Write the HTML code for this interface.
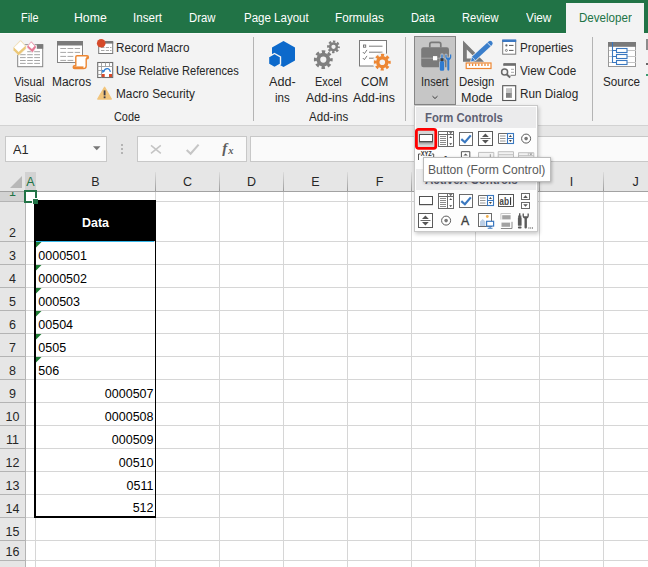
<!DOCTYPE html>
<html lang="en">
<head>
<meta charset="utf-8">
<title>Excel - Developer tab</title>
<style>
html,body{margin:0;padding:0;}
body{width:648px;height:567px;overflow:hidden;position:relative;background:#e6e6e6;
 font-family:"Liberation Sans",sans-serif;color:#262626;}
.abs{position:absolute;}
svg{position:absolute;overflow:visible;}
.t{position:absolute;white-space:nowrap;line-height:1;transform-origin:0 0;}
#tabs{left:0;top:0;width:648px;height:33px;background:#217346;}
#devtab{left:566px;top:3px;width:78px;height:30px;background:#f3f3f3;}
#ribbon{left:0;top:33px;width:648px;height:92px;background:#f3f3f3;}
#ribline{left:0;top:125px;width:648px;height:1px;background:#d2d2d2;}
.sep{position:absolute;top:37px;width:1px;height:84px;background:#b4b4b4;}
.fbox{position:absolute;background:#fafafa;border:1px solid #c8c8c8;box-sizing:border-box;}
#sheet{left:0;top:191px;width:648px;height:376px;background:#fff;}
#colhdr{left:0;top:172px;width:648px;height:19px;background:#e6e6e6;}
.vl{position:absolute;width:1px;background:#d6d6d6;}
.hl{position:absolute;height:1px;background:#d6d6d6;}
</style>
</head>
<body>
<div id="tabs" class="abs"></div><div id="devtab" class="abs"></div>
<span class="t" style="left:20.50px;top:12.42px;font-size:12.5px;color:#ffffff;transform:scaleX(0.8688);">File</span>
<span class="t" style="left:73.50px;top:12.42px;font-size:12.5px;color:#ffffff;transform:scaleX(0.9807);">Home</span>
<span class="t" style="left:133.20px;top:12.42px;font-size:12.5px;color:#ffffff;transform:scaleX(0.9276);">Insert</span>
<span class="t" style="left:189.30px;top:12.42px;font-size:12.5px;color:#ffffff;transform:scaleX(0.9051);">Draw</span>
<span class="t" style="left:243.50px;top:12.42px;font-size:12.5px;color:#ffffff;transform:scaleX(0.9217);">Page Layout</span>
<span class="t" style="left:335.20px;top:12.42px;font-size:12.5px;color:#ffffff;transform:scaleX(0.9368);">Formulas</span>
<span class="t" style="left:411.10px;top:12.42px;font-size:12.5px;color:#ffffff;transform:scaleX(0.8938);">Data</span>
<span class="t" style="left:462.40px;top:12.42px;font-size:12.5px;color:#ffffff;transform:scaleX(0.8930);">Review</span>
<span class="t" style="left:526.00px;top:12.42px;font-size:12.5px;color:#ffffff;transform:scaleX(0.9417);">View</span>
<span class="t" style="left:578.50px;top:12.42px;font-size:12.5px;color:#217346;transform:scaleX(0.9267);">Developer</span>
<div id="ribbon" class="abs"></div><div id="ribline" class="abs"></div><div class="abs" style="left:0;top:33px;width:566px;height:1px;background:#fafafa"></div>
<!-- group separators -->
<div class="sep" style="left:253px"></div>
<div class="sep" style="left:405px"></div>
<div class="sep" style="left:592px"></div>

<!-- Visual Basic icon -->
<svg style="left:8px;top:34px" width="44" height="40" viewBox="0 0 44 40">
  <rect x="9.700" y="10.700" width="25" height="22" fill="#fff" stroke="#858585"/>
  <rect x="28.800" y="10.200" width="6.400" height="4.600" fill="#7a7a7a"/>
  <path d="M19.200 17.700h5.600M26.200 17.700h5.800M12 20.700h5.700M19.200 20.700h5.600M26.200 20.700h5.800M12 23.600h5.700M19.200 23.600h5.600M26.200 23.600h5.800M12 26.500h5.700M19.200 26.500h5.600M26.200 26.500h5.800M12 29.400h5.700M19.200 29.400h5.600M26.200 29.400h5.800" stroke="#a6a6a6" stroke-width="1"/>
  <path d="M12.600 6.100 L18.100 12 L18.100 14.700 L10.600 21.700 L5.200 16.300 L5.200 13.600 Z" fill="#ecc878" stroke="#f3f3f3" stroke-width="0.600"/>
  <path d="M12.600 7.100 L17.200 12 L10.600 17.900 L6 13.600 Z" fill="#fff"/>
  <path d="M23.400 7.100 L28.100 12.500 L28.100 13.700 L24.500 18.700 L19 13.400 L19 12 Z" fill="#e67a96" stroke="#f3f3f3" stroke-width="0.600"/>
  <path d="M23.300 8.300 L26.600 12 L23.900 15 L20.300 11.800 Z" fill="#fff"/>
</svg>

<!-- Macros icon -->
<svg style="left:56px;top:40px" width="34" height="30" viewBox="0 0 34 30">
  <rect x="1.500" y="1.500" width="25" height="21" fill="#fff" stroke="#858585"/>
  <rect x="1" y="1" width="26" height="4.500" fill="#7a7a7a"/>
  <path d="M4.300 8.500h5.800M11.500 8.500h5.800M18.700 8.500h5.400M4.300 12.400h5.800M11.500 12.400h5.800M18.700 12.400h5.400M4.300 16.400h5.800M11.500 16.400h5.800M4.300 20.400h5.800M11.500 20.400h5.800" stroke="#a6a6a6" stroke-width="1"/>
  <path d="M21 15.700 L31 15.700 Q32.400 15.700 32.400 17.200 Q32.400 18.700 31 18.700 L30.200 18.700 L30.200 26 Q30.200 28.600 27.400 28.600 L18.600 28.600 Q17.200 28.600 17.200 27.200 Q17.200 25.800 18.600 25.800 L19.800 25.800 L19.800 17 Q19.800 15.700 21 15.700 Z" fill="#fff" stroke="#ed8733" stroke-width="1.400" stroke-linejoin="round"/>
  <path d="M17.500 27.300 L27.500 27.300" stroke="#ed8733" stroke-width="1.800"/>
  <path d="M30.300 17.200 L32.200 17.200" stroke="#ed8733" stroke-width="1.600"/>
</svg>

<!-- Record Macro -->
<svg style="left:96px;top:38px" width="18" height="17" viewBox="0 0 18 17">
  <rect x="2.700" y="4.500" width="14" height="11" fill="#fff" stroke="#7a7a7a"/>
  <rect x="9" y="3" width="8.200" height="2.600" fill="#7a7a7a"/>
  <path d="M5 9.500h3.500M9.800 9.500h3.200M14 9.500h1.500M5 12.500h3.500M9.800 12.500h3.200M14 12.500h1.500" stroke="#a8a8a8"/>
  <circle cx="5.200" cy="5.200" r="4.300" fill="#d64a2a"/>
</svg>

<!-- Use Relative References -->
<svg style="left:96px;top:61px" width="18" height="18" viewBox="0 0 18 18">
  <rect x="1.700" y="1.500" width="15" height="15" fill="#fff" stroke="#6e6e6e" stroke-width="1.100"/>
  <path d="M1.500 5.500h15M5.500 1.500v15M9.500 1.500v4M13.500 1.500v4M1.500 9.500h4M1.500 13.500h4" stroke="#9c9c9c" stroke-width="0.900"/>
  <rect x="5.700" y="13" width="3" height="3" fill="#d64a2a"/><rect x="13" y="13" width="3" height="3" fill="#d64a2a"/>
  <path d="M7.600 10.600 Q8.600 7.600 11.200 7.600 Q13.900 7.600 14.300 11" fill="none" stroke="#2b7cd3" stroke-width="1.150"/>
  <path d="M5.800 8.800 L9.200 9.700 L6.500 12.200 Z" fill="#2b7cd3"/>
</svg>

<!-- Macro Security -->
<svg style="left:96px;top:85px" width="18" height="16" viewBox="0 0 18 16">
  <path d="M8.600 2.300 L15.300 14 L1.800 14 Z" fill="#f2c57c" stroke="#f2c57c" stroke-width="1.400" stroke-linejoin="round"/>
  <rect x="7.700" y="5.400" width="1.800" height="5" fill="#3b3b4a"/><rect x="7.700" y="11.400" width="1.800" height="1.800" fill="#3b3b4a"/>
</svg>

<!-- Add-ins -->
<svg style="left:267px;top:40px" width="30" height="30" viewBox="0 0 30 30">
  <path d="M16.500 1 L28 7.500 L28 20.500 L16.500 27 L5 20.500 L5 7.500 Z" fill="#0c69cb"/>
  <path d="M7.500 13.500 L13.500 17 L13.500 24 L7.500 27.500 L1.500 24 L1.500 17 Z" fill="#0c69cb" stroke="#f3f3f3" stroke-width="1.400"/>
</svg>

<!-- Excel Add-ins (gears) -->
<svg style="left:313px;top:39px" width="30" height="32" viewBox="0 0 30 32">
  <g fill="none" stroke="#808080">
    <circle cx="10.300" cy="20.600" r="5" stroke-width="3.800"/>
    <circle cx="10.300" cy="20.600" r="7.900" stroke-width="3" stroke-dasharray="3.400 2.800" stroke-dashoffset="1.700"/>
    <circle cx="20.500" cy="7.800" r="3.400" stroke-width="2.500"/>
    <circle cx="20.500" cy="7.800" r="5.300" stroke-width="2.200" stroke-dasharray="2.400 1.760" stroke-dashoffset="1.200"/>
  </g>
</svg>

<!-- COM Add-ins -->
<svg style="left:357px;top:39px" width="35" height="33" viewBox="0 0 35 33">
  <rect x="2.500" y="1.500" width="27" height="25.500" fill="#fff" stroke="#7a7a7a"/>
  <rect x="6.500" y="6" width="2.200" height="2.200" fill="none" stroke="#6e6e6e" stroke-width="0.900"/>
  <path d="M12 7.200h13.500M12 13.200h13.500M12 19.200h6" stroke="#7a7a7a"/>
  <path d="M5.800 13l1.600 1.700l2.600 -3.800M5.800 19l1.600 1.700l2.600 -3.800" fill="none" stroke="#6e6e6e" stroke-width="0.900"/>
  <circle cx="25.300" cy="23.200" r="9.600" fill="#f3f3f3"/>
  <g fill="none" stroke="#ed8733">
    <circle cx="25.300" cy="23.200" r="4.500" stroke-width="3.400"/>
    <circle cx="25.300" cy="23.200" r="7" stroke-width="2.800" stroke-dasharray="3 2.500" stroke-dashoffset="1.500"/>
  </g>
</svg>

<!-- Insert (pressed) -->
<div class="abs" style="left:414px;top:36px;width:42px;height:69px;background:#c6c6c6;border:1px solid #868686;box-sizing:border-box"></div>
<svg style="left:412px;top:34px" width="88" height="40" viewBox="0 0 88 40">
  <path d="M17.800 13.500 L17.800 10.200 Q17.800 8.400 19.600 8.400 L27 8.400 Q28.800 8.400 28.800 10.200 L28.800 13.500" fill="none" stroke="#7a7a7a" stroke-width="1.700"/>
  <rect x="9.200" y="13.300" width="27.800" height="20" rx="2.200" fill="#7a7a7a"/>
  <path d="M9.200 24.200 L37 24.200" stroke="#b4b4b4" stroke-width="0.800"/>
  <rect x="21" y="22.100" width="4.200" height="4.200" fill="#fff"/>
  <g stroke="#c6c6c6" stroke-width="1.600" paint-order="stroke" stroke-linejoin="round">
    <path d="M29.300 20.400 L30.700 20.400 L30.700 24 L31.500 24 L31.500 27.600 Q32.200 28 32.200 29 L32.200 35.400 Q32.200 36.700 30.900 36.700 L29.100 36.700 Q27.800 36.700 27.800 35.400 L27.800 29 Q27.800 28 28.500 27.600 L28.500 24 L29.300 24 Z" fill="#2f7bd0"/>
    <path d="M33.400 20.600 Q32.900 25 35.300 26.300 L35.300 35.600 Q35.300 36.700 36.300 36.700 Q37.300 36.700 37.300 35.600 L37.300 26.300 Q39.700 25 39.200 20.600 L38 20.600 L38 23.600 L34.600 23.600 L34.600 20.600 Z" fill="#2f7bd0"/>
  </g>
  <rect x="28.500" y="24.300" width="3" height="2.800" fill="#3a3a3a"/>
</svg>
<svg style="left:431px;top:94px" width="8" height="6" viewBox="0 0 8 6"><path d="M1.500 2.200 L4 4.500 L6.500 2.200" fill="none" stroke="#3c3c3c" stroke-width="1"/></svg>

<!-- Design Mode -->
<svg style="left:412px;top:34px" width="88" height="40" viewBox="0 0 88 40">
  <path d="M51 6.500 L51 27.800 L72 27.800 Z M54.800 15.500 L54.800 24.600 L63.800 24.600 Z" fill="#7a7a7a" fill-rule="evenodd"/>
  <rect x="54.200" y="29" width="24.800" height="5.500" fill="#fff" stroke="#ed8733" stroke-width="1.200"/>
  <path d="M57.500 29.500v2.600M60.600 29.500v2.600M63.700 29.500v2.600M66.800 29.500v2.600M69.900 29.500v2.600M73 29.500v2.600M76 29.500v2.600" stroke="#ed8733" stroke-width="1.300"/>
  <g stroke="#f3f3f3" stroke-width="1.400" paint-order="stroke" stroke-linejoin="round">
    <path d="M59 27.400 L60 22.800 L76.600 7.400 Q78.300 6.100 79.900 7.600 Q81.500 9.200 80.100 10.900 L63.500 26.300 Z" fill="#3a7ecb"/>
  </g>
  <path d="M75.300 8.700 L78.900 12.200" stroke="#f3f3f3" stroke-width="0.900"/>
  <path d="M60.300 23.200 L63.100 26" stroke="#f3f3f3" stroke-width="0.700"/>
</svg>

<!-- Properties -->
<svg style="left:501px;top:38px" width="16" height="18" viewBox="0 0 16 18">
  <rect x="1.700" y="2.500" width="13" height="13.700" fill="#fff" stroke="#7a7a7a"/>
  <rect x="1.200" y="1.400" width="14" height="2.600" fill="#3b78c2"/>
  <circle cx="5.400" cy="7.400" r="1.100" fill="#666"/>
  <circle cx="5.400" cy="12.400" r="1" fill="none" stroke="#666" stroke-width="0.800"/>
  <path d="M8 7.400h4.500M8 12.400h4.500" stroke="#555"/>
</svg>

<!-- View Code -->
<svg style="left:500px;top:62px" width="17" height="17" viewBox="0 0 17 17">
  <path d="M3.900 3.500 L3.900 1.800 L15.500 1.800 L15.500 13.300 L10.500 13.300" fill="#fff" stroke="#7a7a7a"/>
  <rect x="3.400" y="1.300" width="12.600" height="2.500" fill="#6e6e6e"/>
  <path d="M11 7.300h3M11 10.300h3" stroke="#a8a8a8"/>
  <circle cx="4.600" cy="10" r="3" fill="#f3f3f3" stroke="#6a6a6a" stroke-width="1.500"/>
  <path d="M6.800 12.500 L10.200 15.600" stroke="#6a6a6a" stroke-width="2"/>
</svg>

<!-- Run Dialog -->
<svg style="left:501px;top:85px" width="16" height="17" viewBox="0 0 16 17">
  <rect x="1.700" y="0.700" width="13" height="14.800" fill="#fff" stroke="#555" stroke-width="1.100"/>
  <rect x="5" y="3.200" width="6" height="4.800" fill="#c4c4c4"/>
  <rect x="5" y="8" width="6" height="4.800" fill="#808080"/>
  <rect x="9.500" y="3.200" width="1.500" height="9.600" fill="#b0b0b0" opacity=".6"/>
</svg>

<!-- Source -->
<svg style="left:607px;top:41px" width="30" height="27" viewBox="0 0 30 27">
  <rect x="1.500" y="1.500" width="27" height="24" fill="#fff" stroke="#989898"/>
  <rect x="1" y="1" width="28" height="4.800" fill="#7a7a7a"/>
  <path d="M2 9.500h27M2 15.500h27M2 21.500h27" stroke="#c4c4c4"/>
  <path d="M5.500 1 L5.500 21.500 L9.500 21.500 M5.500 9.500 L9.500 9.500 M5.500 15.500 L9.500 15.500" fill="none" stroke="#3a78c0" stroke-width="1.100"/>
  <rect x="9.500" y="7.500" width="10.500" height="4" fill="#fff" stroke="#3a78c0" stroke-width="1.100"/>
  <rect x="9.500" y="13.500" width="10.500" height="4" fill="#fff" stroke="#3a78c0" stroke-width="1.100"/>
  <rect x="9.500" y="19.500" width="10.500" height="4" fill="#fff" stroke="#3a78c0" stroke-width="1.100"/>
</svg>
<div class="abs" style="left:646px;top:39px;width:2px;height:11px;background:#8c8c8c"></div>
<div class="abs" style="left:646px;top:63px;width:2px;height:2px;background:#666"></div>
<div class="abs" style="left:646px;top:74px;width:2px;height:2px;background:#3c9a70"></div>
<span class="t" style="left:13.50px;top:76.42px;font-size:12.5px;color:#262626;transform:scaleX(0.9018);">Visual</span><span class="t" style="left:15.30px;top:92.42px;font-size:12.5px;color:#262626;transform:scaleX(0.8572);">Basic</span><span class="t" style="left:52.30px;top:76.42px;font-size:12.5px;color:#262626;transform:scaleX(0.9566);">Macros</span><span class="t" style="left:116.30px;top:42.42px;font-size:12.5px;color:#262626;transform:scaleX(0.9351);">Record Macro</span><span class="t" style="left:116.30px;top:65.42px;font-size:12.5px;color:#262626;transform:scaleX(0.8875);">Use Relative References</span><span class="t" style="left:116.30px;top:88.42px;font-size:12.5px;color:#262626;transform:scaleX(0.9465);">Macro Security</span><span class="t" style="left:113.50px;top:111.42px;font-size:12.5px;color:#262626;transform:scaleX(0.8701);">Code</span><span class="t" style="left:269.20px;top:76.42px;font-size:12.5px;color:#262626;transform:scaleX(1.0074);">Add-</span><span class="t" style="left:275.30px;top:92.42px;font-size:12.5px;color:#262626;transform:scaleX(0.9200);">ins</span><span class="t" style="left:314.60px;top:76.42px;font-size:12.5px;color:#262626;transform:scaleX(0.8702);">Excel</span><span class="t" style="left:306.00px;top:92.42px;font-size:12.5px;color:#262626;transform:scaleX(0.9862);">Add-ins</span><span class="t" style="left:360.50px;top:76.42px;font-size:12.5px;color:#262626;transform:scaleX(0.9361);">COM</span><span class="t" style="left:353.30px;top:92.42px;font-size:12.5px;color:#262626;transform:scaleX(0.9862);">Add-ins</span><span class="t" style="left:309.40px;top:111.42px;font-size:12.5px;color:#262626;transform:scaleX(0.9249);">Add-ins</span><span class="t" style="left:420.80px;top:76.42px;font-size:12.5px;color:#262626;transform:scaleX(0.8797);">Insert</span><span class="t" style="left:459.20px;top:76.42px;font-size:12.5px;color:#262626;transform:scaleX(0.9072);">Design</span><span class="t" style="left:460.80px;top:92.42px;font-size:12.5px;color:#262626;transform:scaleX(1.0074);">Mode</span><span class="t" style="left:520.30px;top:42.42px;font-size:12.5px;color:#262626;transform:scaleX(0.9338);">Properties</span><span class="t" style="left:520.30px;top:65.42px;font-size:12.5px;color:#262626;transform:scaleX(0.9332);">View Code</span><span class="t" style="left:520.30px;top:88.42px;font-size:12.5px;color:#262626;transform:scaleX(0.9411);">Run Dialog</span><span class="t" style="left:603.30px;top:76.42px;font-size:12.5px;color:#262626;transform:scaleX(0.9342);">Source</span>
<div class="fbox" style="left:5px;top:136px;width:102px;height:26px"></div>
<span class="t" style="left:12.60px;top:144.42px;font-size:12.5px;color:#262626;transform:scaleX(1.0203);">A1</span><svg style="left:93px;top:146px" width="8" height="5" viewBox="0 0 8 5"><path d="M0 0.300 L7.500 0.300 L3.750 4.200 Z" fill="#777"/></svg>
<svg style="left:121px;top:143px" width="2" height="12" viewBox="0 0 2 12"><rect x="0" y="1" width="2" height="2" fill="#b4b4b4"/><rect x="0" y="5" width="2" height="2" fill="#b4b4b4"/><rect x="0" y="9" width="2" height="2" fill="#b4b4b4"/></svg>
<div class="fbox" style="left:137px;top:136px;width:110px;height:26px"></div>
<svg style="left:150px;top:144px" width="12" height="11" viewBox="0 0 12 11"><path d="M1 1.400 L10.800 9.400 M10.800 1.400 L1 9.400" stroke="#c4c4c4" stroke-width="1.500" fill="none"/></svg>
<svg style="left:185px;top:143px" width="15" height="13" viewBox="0 0 15 13"><path d="M1.700 7 L5.600 10.700 L13.600 1.600" stroke="#c6c6c6" stroke-width="2.100" fill="none"/></svg>
<span class="t" style="left:222.3px;top:141.3px;font-family:'Liberation Serif',serif;font-style:italic;font-weight:bold;font-size:15px;color:#5e5e5e;">f</span><span class="t" style="left:228.2px;top:145.600px;font-family:'Liberation Serif',serif;font-style:italic;font-weight:bold;font-size:10.500px;color:#5e5e5e;">x</span>
<div class="fbox" style="left:250px;top:136px;width:400px;height:26px"></div>
<div id="colhdr" class="abs"></div><div id="sheet" class="abs"></div>
<div class="abs" style="left:0;top:191px;width:25px;height:376px;background:#e6e6e6"></div>
<svg style="left:10px;top:176px" width="12" height="12" viewBox="0 0 12 12"><path d="M12 0 L12 12 L0 12 Z" fill="#b8b8b8"/></svg>
<div class="abs" style="left:25px;top:172px;width:11px;height:18px;background:#d2d2d2"></div><div class="abs" style="left:25px;top:190px;width:11px;height:2px;background:#217346"></div><div class="abs" style="left:0;top:192px;width:24px;height:9px;background:#d2d2d2"></div><div class="abs" style="left:24px;top:191px;width:2px;height:11px;background:#217346"></div>
<div class="vl" style="left:155px;top:172px;height:19px;background:linear-gradient(to bottom,#dcdcdc,#9c9c9c)"></div><div class="vl" style="left:219px;top:172px;height:19px;background:linear-gradient(to bottom,#dcdcdc,#9c9c9c)"></div><div class="vl" style="left:283px;top:172px;height:19px;background:linear-gradient(to bottom,#dcdcdc,#9c9c9c)"></div><div class="vl" style="left:347px;top:172px;height:19px;background:linear-gradient(to bottom,#dcdcdc,#9c9c9c)"></div><div class="vl" style="left:411px;top:172px;height:19px;background:linear-gradient(to bottom,#dcdcdc,#9c9c9c)"></div><div class="vl" style="left:475px;top:172px;height:19px;background:linear-gradient(to bottom,#dcdcdc,#9c9c9c)"></div><div class="vl" style="left:539px;top:172px;height:19px;background:linear-gradient(to bottom,#dcdcdc,#9c9c9c)"></div><div class="vl" style="left:603px;top:172px;height:19px;background:linear-gradient(to bottom,#dcdcdc,#9c9c9c)"></div><div class="vl" style="left:667px;top:172px;height:19px;background:linear-gradient(to bottom,#dcdcdc,#9c9c9c)"></div>
<div class="hl" style="left:0;top:191px;width:648px;background:#a2a2a2"></div><div class="vl" style="left:25px;top:191px;height:376px;background:#b4b4b4"></div>
<span class="t" style="left:20.5px;top:176.42px;width:20px;text-align:center;font-size:12.5px;color:#217346">A</span><span class="t" style="left:85.5px;top:176.42px;width:20px;text-align:center;font-size:12.5px;color:#262626">B</span><span class="t" style="left:177.5px;top:176.42px;width:20px;text-align:center;font-size:12.5px;color:#262626">C</span><span class="t" style="left:241.5px;top:176.42px;width:20px;text-align:center;font-size:12.5px;color:#262626">D</span><span class="t" style="left:305.5px;top:176.42px;width:20px;text-align:center;font-size:12.5px;color:#262626">E</span><span class="t" style="left:369.5px;top:176.42px;width:20px;text-align:center;font-size:12.5px;color:#262626">F</span><span class="t" style="left:561.5px;top:176.42px;width:20px;text-align:center;font-size:12.5px;color:#262626">I</span><span class="t" style="left:625.5px;top:176.42px;width:20px;text-align:center;font-size:12.5px;color:#262626">J</span>
<div class="hl" style="left:26px;top:201px;width:622px"></div><div class="hl" style="left:0;top:201px;width:25px;background:#b4b4b4"></div><div class="hl" style="left:26px;top:241px;width:622px"></div><div class="hl" style="left:0;top:241px;width:25px;background:#b4b4b4"></div><div class="hl" style="left:26px;top:264px;width:622px"></div><div class="hl" style="left:0;top:264px;width:25px;background:#b4b4b4"></div><div class="hl" style="left:26px;top:287px;width:622px"></div><div class="hl" style="left:0;top:287px;width:25px;background:#b4b4b4"></div><div class="hl" style="left:26px;top:310px;width:622px"></div><div class="hl" style="left:0;top:310px;width:25px;background:#b4b4b4"></div><div class="hl" style="left:26px;top:333px;width:622px"></div><div class="hl" style="left:0;top:333px;width:25px;background:#b4b4b4"></div><div class="hl" style="left:26px;top:356px;width:622px"></div><div class="hl" style="left:0;top:356px;width:25px;background:#b4b4b4"></div><div class="hl" style="left:26px;top:379px;width:622px"></div><div class="hl" style="left:0;top:379px;width:25px;background:#b4b4b4"></div><div class="hl" style="left:26px;top:402px;width:622px"></div><div class="hl" style="left:0;top:402px;width:25px;background:#b4b4b4"></div><div class="hl" style="left:26px;top:425px;width:622px"></div><div class="hl" style="left:0;top:425px;width:25px;background:#b4b4b4"></div><div class="hl" style="left:26px;top:448px;width:622px"></div><div class="hl" style="left:0;top:448px;width:25px;background:#b4b4b4"></div><div class="hl" style="left:26px;top:471px;width:622px"></div><div class="hl" style="left:0;top:471px;width:25px;background:#b4b4b4"></div><div class="hl" style="left:26px;top:494px;width:622px"></div><div class="hl" style="left:0;top:494px;width:25px;background:#b4b4b4"></div><div class="hl" style="left:26px;top:517px;width:622px"></div><div class="hl" style="left:0;top:517px;width:25px;background:#b4b4b4"></div><div class="hl" style="left:26px;top:540px;width:622px"></div><div class="hl" style="left:0;top:540px;width:25px;background:#b4b4b4"></div><div class="hl" style="left:26px;top:560px;width:622px"></div><div class="hl" style="left:0;top:560px;width:25px;background:#b4b4b4"></div>
<div class="vl" style="left:35px;top:192px;height:375px"></div><div class="vl" style="left:155px;top:192px;height:375px"></div><div class="vl" style="left:219px;top:192px;height:375px"></div><div class="vl" style="left:283px;top:192px;height:375px"></div><div class="vl" style="left:347px;top:192px;height:375px"></div><div class="vl" style="left:411px;top:192px;height:375px"></div><div class="vl" style="left:475px;top:192px;height:375px"></div><div class="vl" style="left:539px;top:192px;height:375px"></div><div class="vl" style="left:603px;top:192px;height:375px"></div><div class="vl" style="left:667px;top:192px;height:375px"></div>
<span class="t" style="left:0;top:227.42px;width:25px;text-align:center;font-size:12.5px;color:#262626">2</span><span class="t" style="left:0;top:250.42px;width:25px;text-align:center;font-size:12.5px;color:#262626">3</span><span class="t" style="left:0;top:273.42px;width:25px;text-align:center;font-size:12.5px;color:#262626">4</span><span class="t" style="left:0;top:296.42px;width:25px;text-align:center;font-size:12.5px;color:#262626">5</span><span class="t" style="left:0;top:319.42px;width:25px;text-align:center;font-size:12.5px;color:#262626">6</span><span class="t" style="left:0;top:342.42px;width:25px;text-align:center;font-size:12.5px;color:#262626">7</span><span class="t" style="left:0;top:365.42px;width:25px;text-align:center;font-size:12.5px;color:#262626">8</span><span class="t" style="left:0;top:388.42px;width:25px;text-align:center;font-size:12.5px;color:#262626">9</span><span class="t" style="left:0;top:411.42px;width:25px;text-align:center;font-size:12.5px;color:#262626">10</span><span class="t" style="left:0;top:434.42px;width:25px;text-align:center;font-size:12.5px;color:#262626">11</span><span class="t" style="left:0;top:457.42px;width:25px;text-align:center;font-size:12.5px;color:#262626">12</span><span class="t" style="left:0;top:480.42px;width:25px;text-align:center;font-size:12.5px;color:#262626">13</span><span class="t" style="left:0;top:503.42px;width:25px;text-align:center;font-size:12.5px;color:#262626">14</span><span class="t" style="left:0;top:526.42px;width:25px;text-align:center;font-size:12.5px;color:#262626">15</span><span class="t" style="left:0;top:546.42px;width:25px;text-align:center;font-size:12.5px;color:#262626">16</span><div class="abs" style="left:0;top:192px;width:24px;height:8px;overflow:hidden"><span class="t" style="left:0;top:-5.58px;width:25px;text-align:center;font-size:12.5px;color:#217346">1</span></div>
<div class="abs" style="left:34px;top:200px;width:122px;height:41px;background:#000"></div><div class="abs" style="left:36px;top:241px;width:118px;height:1px;background:#35b6e8"></div>
<span class="t" style="left:82.00px;top:216.92px;font-size:12.5px;color:#ffffff;font-weight:bold;transform:scaleX(0.9965);">Data</span><div class="abs" style="left:34px;top:241px;width:2px;height:277px;background:#000"></div><div class="abs" style="left:155px;top:241px;width:1px;height:277px;background:#000"></div><div class="abs" style="left:34px;top:516px;width:122px;height:2px;background:#000"></div>
<span class="t" style="left:38.3px;top:250.42px;font-size:12.5px;color:#000">0000501</span><svg style="left:36px;top:242px" width="6" height="6" viewBox="0 0 6 6"><path d="M0 0 L5.500 0 L0 5.500 Z" fill="#1e7b34"/></svg><span class="t" style="left:38.3px;top:273.42px;font-size:12.5px;color:#000">0000502</span><svg style="left:36px;top:265px" width="6" height="6" viewBox="0 0 6 6"><path d="M0 0 L5.500 0 L0 5.500 Z" fill="#1e7b34"/></svg><span class="t" style="left:38.3px;top:296.42px;font-size:12.5px;color:#000">000503</span><svg style="left:36px;top:288px" width="6" height="6" viewBox="0 0 6 6"><path d="M0 0 L5.500 0 L0 5.500 Z" fill="#1e7b34"/></svg><span class="t" style="left:38.3px;top:319.42px;font-size:12.5px;color:#000">00504</span><svg style="left:36px;top:311px" width="6" height="6" viewBox="0 0 6 6"><path d="M0 0 L5.500 0 L0 5.500 Z" fill="#1e7b34"/></svg><span class="t" style="left:38.3px;top:342.42px;font-size:12.5px;color:#000">0505</span><svg style="left:36px;top:334px" width="6" height="6" viewBox="0 0 6 6"><path d="M0 0 L5.500 0 L0 5.500 Z" fill="#1e7b34"/></svg><span class="t" style="left:38.3px;top:365.42px;font-size:12.5px;color:#000">506</span><svg style="left:36px;top:357px" width="6" height="6" viewBox="0 0 6 6"><path d="M0 0 L5.500 0 L0 5.500 Z" fill="#1e7b34"/></svg>
<span class="t" style="left:53.5px;width:100px;text-align:right;top:388.42px;font-size:12.5px;color:#000">0000507</span><span class="t" style="left:53.5px;width:100px;text-align:right;top:411.42px;font-size:12.5px;color:#000">0000508</span><span class="t" style="left:53.5px;width:100px;text-align:right;top:434.42px;font-size:12.5px;color:#000">000509</span><span class="t" style="left:53.5px;width:100px;text-align:right;top:457.42px;font-size:12.5px;color:#000">00510</span><span class="t" style="left:53.5px;width:100px;text-align:right;top:480.42px;font-size:12.5px;color:#000">0511</span><span class="t" style="left:53.5px;width:100px;text-align:right;top:502.42px;font-size:12.5px;color:#000">512</span>
<div class="abs" style="left:24px;top:190px;width:13px;height:13px;border:2px solid #217346;box-sizing:border-box"></div><div class="abs" style="left:32px;top:198px;width:6px;height:6px;background:#217346;border-left:1px solid #fff;border-top:1px solid #fff;box-sizing:border-box"></div>
<!-- dropdown panel -->
<div class="abs" style="left:414px;top:105px;width:124px;height:127px;background:#fdfdfd;border:1px solid #c8c8c8;box-sizing:border-box;box-shadow:1px 2px 4px rgba(0,0,0,.22)"></div>
<div class="abs" style="left:416px;top:107px;width:120px;height:21px;background:#ebebec"></div>
<div class="abs" style="left:416px;top:169px;width:120px;height:21px;background:#ebebec"></div>
<svg style="left:413px;top:126px" width="126" height="110" viewBox="0 0 126 110" font-family="Liberation Sans, sans-serif">
  

  <!-- Form Controls row 1 -->
  <rect x="3.400" y="3.400" width="19.400" height="18.900" rx="2" fill="#d6d6d6" stroke="#ff0000" stroke-width="2.800"/>
  <rect x="6" y="16.500" width="14" height="2" fill="#b2b2b2"/>
  <rect x="6.500" y="8.500" width="13" height="7" fill="#fff" stroke="#505050"/>
  <rect x="6" y="15" width="14" height="1.500" fill="#505050"/>
  <g><rect x="25.500" y="5.500" width="15" height="15" fill="#fff" stroke="#6a6a6a"/>
      <path d="M34.500 5.500v15M25.500 8.500h15" stroke="#6a6a6a" stroke-width="1"/>
      <path d="M27 10.500h6M27 12.500h6M27 14.500h6M27 16.500h6M27 18.500h6" stroke="#8a8a8a" stroke-width="1"/>
      <path d="M36 6.200 L39.400 6.200 L37.700 7.900 Z M36.200 12 L39.200 12 L37.700 10.200 Z M36.200 17.300 L39.200 17.300 L37.700 19.100 Z" fill="#444"/></g><g><rect x="46.500" y="6.500" width="13" height="13" fill="#fff" stroke="#6a6a6a"/>
      <path d="M48.300 13.200 L51.900 16.300 L57.800 9.400" fill="none" stroke="#3a78c0" stroke-width="2.200"/></g><g><rect x="65.500" y="5.500" width="14" height="14" fill="#fff" stroke="#5a5a5a" stroke-width="1"/>
      <path d="M67.500 12.500h10" stroke="#6a6a6a" stroke-width="1"/>
      <path d="M69 10.900 L75.800 10.900 L72.400 7.400 Z M69 13.900 L75.800 13.900 L72.400 17.400 Z" fill="#555"/></g><g><path d="M94 7.500 L85.500 7.500 L85.500 17.500 L94 17.500" fill="#fff" stroke="#6a6a6a"/>
      <path d="M87 10h5.500M87 12.500h5.500M87 15h5.500" stroke="#8a8a8a" stroke-width="0.900"/>
      <rect x="94.500" y="7.500" width="6" height="10" fill="#fff" stroke="#3a78c0" stroke-width="1.100"/>
      <path d="M94.500 12.500h6" stroke="#3a78c0" stroke-width="1"/>
      <path d="M95.900 10.900 L98.900 10.900 L97.400 9.100 Z M95.900 14.100 L98.900 14.100 L97.400 15.900 Z" fill="#444"/></g><g><circle cx="113.100" cy="12.600" r="4.500" fill="#fff" stroke="#5a5a5a"/>
      <circle cx="113.100" cy="12.600" r="1.800" fill="#777"/></g>

  <!-- Form Controls row 2 (mostly covered by tooltip) -->
  <path d="M7.500 28 L5.500 28 L5.500 34 M18.700 28 L20.700 28 L20.700 34" fill="none" stroke="#555"/>
  <text x="7.800" y="29.700" font-size="6.300" font-weight="bold" fill="#333" textLength="11" lengthAdjust="spacingAndGlyphs">XYZ</text>
  <text x="29" y="37.600" font-size="10" font-weight="bold" fill="#444">Aa</text>
  <path d="M48.400 34 L48.400 25.700 L56.800 25.700 L56.800 34" fill="#fff" stroke="#555"/>
  <path d="M50.400 29.600 L54.800 29.600 L52.600 27.400 Z" fill="#555"/>
  <g fill="#f2f2f2" stroke="#c0c0c0">
    <path d="M65.500 34 L65.500 26.400 L80.800 26.400 L80.800 34"/>
    <path d="M85.200 34 L85.200 25.700 L100.500 25.700 L100.500 34 M85.200 28.700h15.300"/>
    <path d="M105.500 34 L105.500 26.700 L120.800 26.700 L120.800 34 M105.500 29.700h15.300M115.300 26.700v3"/>
  </g>
  <path d="M77.300 28.200v3.500" stroke="#9a9a9a"/>
  <path d="M116.300 27.600 L119.500 27.600 L117.900 29.300 Z" fill="#8a8a8a"/>

  <!-- ActiveX row 1 -->
  <g transform="translate(0,62)">
    <rect x="6.500" y="8.500" width="13" height="8" fill="#fff" stroke="#505050" stroke-width="1"/>
    <rect x="6" y="16" width="14" height="1.200" fill="#505050"/>
    <g><rect x="25.500" y="5.500" width="15" height="15" fill="#fff" stroke="#6a6a6a"/>
      <path d="M34.500 5.500v15M25.500 8.500h15" stroke="#6a6a6a" stroke-width="1"/>
      <path d="M27 10.500h6M27 12.500h6M27 14.500h6M27 16.500h6M27 18.500h6" stroke="#8a8a8a" stroke-width="1"/>
      <path d="M36 6.200 L39.400 6.200 L37.700 7.900 Z M36.200 12 L39.200 12 L37.700 10.200 Z M36.200 17.300 L39.200 17.300 L37.700 19.100 Z" fill="#444"/></g>
  </g>
  <g transform="translate(0,62)"><g><rect x="46.500" y="6.500" width="13" height="13" fill="#fff" stroke="#6a6a6a"/>
      <path d="M48.300 13.200 L51.900 16.300 L57.800 9.400" fill="none" stroke="#3a78c0" stroke-width="2.200"/></g></g>
  <g transform="translate(-20,62)"><g><path d="M94 7.500 L85.500 7.500 L85.500 17.500 L94 17.500" fill="#fff" stroke="#6a6a6a"/>
      <path d="M87 10h5.500M87 12.500h5.500M87 15h5.500" stroke="#8a8a8a" stroke-width="0.900"/>
      <rect x="94.500" y="7.500" width="6" height="10" fill="#fff" stroke="#3a78c0" stroke-width="1.100"/>
      <path d="M94.500 12.500h6" stroke="#3a78c0" stroke-width="1"/>
      <path d="M95.900 10.900 L98.900 10.900 L97.400 9.100 Z M95.900 14.100 L98.900 14.100 L97.400 15.900 Z" fill="#444"/></g></g>
  <rect x="85.500" y="68.500" width="15" height="12" fill="#fff" stroke="#555" stroke-width="1"/>
  <text x="86.300" y="78.700" font-size="10.500" font-weight="bold" fill="#4a4a4a" textLength="9.800" lengthAdjust="spacingAndGlyphs">ab</text>
  <path d="M97.600 71.200v7.800" stroke="#222" stroke-width="1"/>
  <rect x="108.500" y="67.500" width="8" height="6" fill="#fff" stroke="#6a6a6a"/>
  <rect x="108.500" y="76.500" width="8" height="6" fill="#fff" stroke="#6a6a6a"/>
  <path d="M110.200 71.900 L114.800 71.900 L112.500 69.300 Z M110.200 78.200 L114.800 78.200 L112.500 80.800 Z" fill="#555"/>

  <!-- ActiveX row 2 -->
  <g transform="translate(-60,82)"><g><rect x="65.500" y="5.500" width="14" height="14" fill="#fff" stroke="#5a5a5a" stroke-width="1"/>
      <path d="M67.500 12.500h10" stroke="#6a6a6a" stroke-width="1"/>
      <path d="M69 10.900 L75.800 10.900 L72.400 7.400 Z M69 13.900 L75.800 13.900 L72.400 17.400 Z" fill="#555"/></g></g>
  <g transform="translate(-80,82)"><g><circle cx="113.100" cy="12.600" r="4.500" fill="#fff" stroke="#5a5a5a"/>
      <circle cx="113.100" cy="12.600" r="1.800" fill="#777"/></g></g>
  <text x="47.900" y="98.800" font-size="12.300" fill="#3e3e3e" stroke="#3e3e3e" stroke-width="0.350">A</text>
  <!-- image -->
  <rect x="65.500" y="87.500" width="13" height="13" fill="#fff" stroke="#6a6a6a"/>
  <circle cx="74.300" cy="90.500" r="1.400" fill="#f0ae4e"/>
  <path d="M67 100 L67 95.500 L69.700 93 L72.400 95.500 L72.400 100 Z" fill="#bccfe6"/>
  <rect x="73.600" y="95.300" width="7" height="4.800" fill="#fff" stroke="#3a78c0" stroke-width="1.200"/>
  <path d="M77.100 100.200v1.800M74.700 102.300h4.800" stroke="#3a78c0" stroke-width="1.100"/>
  <!-- toggle -->
  <path d="M87.900 93.600 L87.900 87.500 L97.800 87.500" fill="none" stroke="#c8c8c8"/>
  <rect x="89.200" y="89.200" width="8.400" height="4.200" fill="#a2a2a2"/>
  <path d="M99 95.800 L99 102.500 L87.900 102.500" fill="none" stroke="#8a8a8a"/>
  <rect x="88.500" y="96.600" width="8.600" height="4.200" fill="#a2a2a2"/>
  <!-- tools -->
  <path d="M106.700 87.200v4" stroke="#555" stroke-width="1.400"/>
  <path d="M105 90.200h3.400" stroke="#555" stroke-width="1.200"/>
  <rect x="104.900" y="91" width="3.700" height="8.800" rx="0.900" fill="#5a5a5a"/>
  <rect x="104.900" y="100.500" width="3.700" height="2" rx="0.900" fill="#5a5a5a"/>
  <path d="M109.600 87.400 Q109 91.500 111.500 92.600 L111.500 101.500 Q111.500 102.500 112.700 102.500 Q113.900 102.500 113.900 101.500 L113.900 92.600 Q116.400 91.500 115.800 87.400 L114.500 87.400 L114.500 90.300 L110.900 90.300 L110.900 87.400 Z" fill="#5a5a5a"/>
  <rect x="115.400" y="101.500" width="1" height="1" fill="#444"/><rect x="117.200" y="101.500" width="1" height="1" fill="#444"/><rect x="119" y="101.500" width="1" height="1" fill="#444"/>
</svg>
<span class="t" style="left:425.30px;top:112.42px;font-size:12.5px;color:#5d6072;font-weight:bold;transform:scaleX(0.9047);">Form Controls</span><span class="t" style="left:425.30px;top:174.42px;font-size:12.5px;color:#5d6072;font-weight:bold;transform:scaleX(0.9204);">ActiveX Controls</span><div class="abs" style="left:423px;top:157px;width:128px;height:25px;background:#fff;border:1px solid #bcbcbc;box-sizing:border-box;box-shadow:1px 1px 3px rgba(0,0,0,.25)"></div>
<span class="t" style="left:428.30px;top:164.42px;font-size:12.5px;color:#5a5a5a;transform:scaleX(0.9713);">Button (Form Control)</span>
</body>
</html>
